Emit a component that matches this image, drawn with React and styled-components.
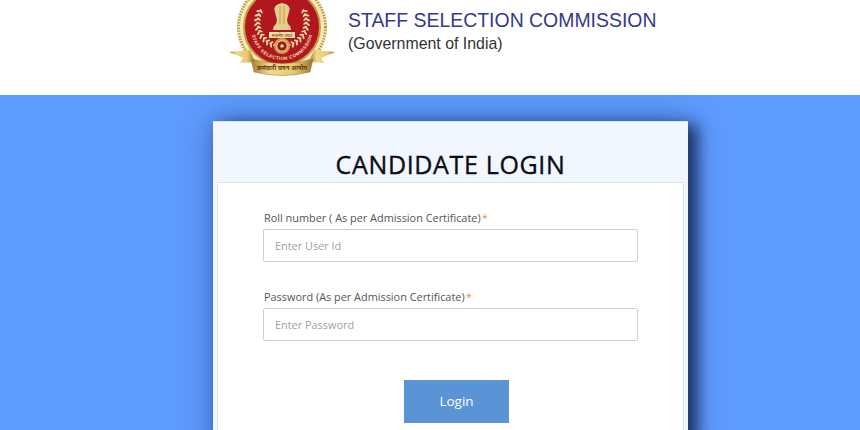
import React from "react";
import styled, { createGlobalStyle } from "styled-components";

const Global = createGlobalStyle`
  html, body { margin: 0; padding: 0; width: 860px; height: 430px; overflow: hidden; background: #5f9cff; }
  * { box-sizing: border-box; }
`;
const Page = styled.div`
  width: 860px; height: 430px; overflow: hidden; display: flex; flex-direction: column;
  background: #5f9cff;
`;
const Header = styled.header`
  height: 95px; flex: none; background: #fff; display: flex; align-items: flex-start;
  padding-left: 228px; overflow: hidden; position: relative; z-index: 2;
`;
const Brand = styled.div`
  display: flex; flex-direction: column; margin-left: 12px; padding-top: 9px;
  font-family: "Liberation Sans", Arial, sans-serif;
`;
const BrandName = styled.div`
  font-size: 19.45px; line-height: 22px; color: #34398f; white-space: nowrap;
`;
const BrandSub = styled.div`
  font-size: 15.9px; line-height: 20px; margin-top: 3px; color: #333; white-space: nowrap;
`;
const Main = styled.main`
  flex: 1; padding: 26px 172px 0 213px;
`;
const Card = styled.section`
  width: 475px; height: 340px; background: #f1f6ff; padding: 0 4px; border-top: 1px solid #d9e4f7;
  box-shadow: 9px 4px 14px rgba(20, 35, 80, 0.85), 0 0 32px rgba(30, 60, 130, 0.5);
`;
const Title = styled.h1`
  margin: 0; height: 60px; padding-top: 26px; text-align: center;
  font: 400 25px/32px "Open Sans", sans-serif; letter-spacing: 0.65px; color: #0a0d14;
  -webkit-text-stroke: 0.35px #0a0d14;
`;
const Panel = styled.form`
  height: 280px; background: #fff; border: 1px solid #dfe4ec; border-bottom: none;
  padding: 27px 46px 0 45px; display: flex; flex-direction: column;
`;
const Field = styled.div`
  display: flex; flex-direction: column; margin-bottom: 27px;
`;
const Label = styled.label`
  font: 400 10.9px/15px "Open Sans", sans-serif; color: #555; padding-left: 1px; height: 19px; white-space: nowrap;
`;
const Star = styled.span`
  color: #ee8a4a; margin-left: 1px;
`;
const Input = styled.input`
  width: 375px; height: 33px; border: 1px solid #cfcfd2; border-radius: 2px; background: #fff;
  padding: 0 11px; font: 400 10.9px "Open Sans", sans-serif; color: #444; outline: none;
  &::placeholder { color: #a0a0a0; opacity: 1; }
`;
const Actions = styled.div`
  display: flex; justify-content: center; margin-top: 12px; padding-left: 13px;
`;
const Button = styled.button`
  width: 105px; height: 43px; border: none; background: #5b94d6; color: #fff; padding: 0 0 2px;
  font: 400 13.5px "Open Sans", sans-serif;
`;

const CX = 54;
const wreath = (side) => {
  const out = [];
  for (let i = 0; i < 12; i++) {
    const deg = 62 + i * 10;
    const a = (deg * Math.PI) / 180;
    const x = CX + side * Math.sin(a) * 25;
    const y = 22 - Math.cos(a) * 25;
    for (const off of [-1, 1]) {
      out.push(
        <ellipse key={`${i}${off}`} cx={x + side * off * 1.5} cy={y + off * 0.6} rx="2.4" ry="1" fill="#ecd9a2"
          transform={`rotate(${side * (deg - 90 + off * 35)} ${x} ${y})`} />
      );
    }
  }
  return out;
};

const Logo = () => (
  <svg width="108" height="78" viewBox="0 0 108 78" style={{ flex: "none" }}>
    <defs>
      <linearGradient id="gold" x1="0" x2="1">
        <stop offset="0" stopColor="#a97c2c" />
        <stop offset="0.3" stopColor="#f0d98e" />
        <stop offset="0.7" stopColor="#e7c96f" />
        <stop offset="1" stopColor="#9c7428" />
      </linearGradient>
    </defs>
    <circle cx={CX} cy="27" r="45" fill="#f5e8ba" />
    <circle cx={CX} cy="27" r="43.5" fill="none" stroke="#bd9a4a" strokeWidth="3" strokeDasharray="1.4 1.4" />
    <circle cx={CX} cy="27" r="38" fill="#b0171f" stroke="#c99c3c" strokeWidth="2" />
    {wreath(1)}
    {wreath(-1)}
    <path d="M47 12 q-3 -7 7 -9 q10 2 7 9 q-1 4 -2 8 l1 4 q3 2 3 6 h-18 q0 -4 3 -6 l1 -4 q-1 -4 -2 -8 z" fill="#e6cf8c" />
    <path d="M52 6 v18 M56 6 v18" stroke="#b08a3e" strokeWidth="0.7" />
    <rect x="41" y="32" width="26" height="6" fill="#f1dfa8" />
    <text x={CX} y="36.8" textAnchor="middle" fontFamily="Noto Sans, sans-serif" fontSize="4.2" fill="#6b2a12">सत्यमेव जयते</text>
    <circle cx={CX} cy="46" r="8" fill="#c9a24c" />
    <circle cx={CX} cy="46" r="5.2" fill="#a3181c" stroke="#efdca0" strokeWidth="1" />
    <circle cx={CX} cy="46" r="1.8" fill="#efdca0" />
    <path id="ssc-arc" d="M24 35 A30.5 30.5 0 0 0 84 35" fill="none" />
    <text fontFamily="Liberation Sans, sans-serif" fontSize="4.6" fontWeight="700" fill="#f3e3ad">
      <textPath href="#ssc-arc" textLength="84">STAFF SELECTION COMMISSION</textPath>
    </text>
    <path d="M1 52 L22 50 L27 62 L12 63 L15 58 Z" fill="url(#gold)" />
    <path d="M107 52 L86 50 L81 62 L96 63 L93 58 Z" fill="url(#gold)" />
    <path d="M23 59 Q54 68 85 59 L82 72 Q54 79 26 72 Z" fill="url(#gold)" stroke="#9c7428" strokeWidth="0.5" />
    <text x={CX} y="70" textAnchor="middle" fontFamily="Noto Sans, sans-serif" fontSize="6" fontWeight="700" fill="#5d3c10">कर्मचारी चयन आयोग</text>
  </svg>
);

export default function App() {
  return (
    <Page>
      <Global />
      <Header>
        <Logo />
        <Brand>
          <BrandName>STAFF SELECTION COMMISSION</BrandName>
          <BrandSub>(Government of India)</BrandSub>
        </Brand>
      </Header>
      <Main>
        <Card>
          <Title>CANDIDATE LOGIN</Title>
          <Panel>
            <Field>
              <Label>Roll number ( As per Admission Certificate)<Star>*</Star></Label>
              <Input placeholder="Enter User Id" />
            </Field>
            <Field>
              <Label>Password (As per Admission Certificate)<Star>*</Star></Label>
              <Input placeholder="Enter Password" />
            </Field>
            <Actions>
              <Button type="button">Login</Button>
            </Actions>
          </Panel>
        </Card>
      </Main>
    </Page>
  );
}
